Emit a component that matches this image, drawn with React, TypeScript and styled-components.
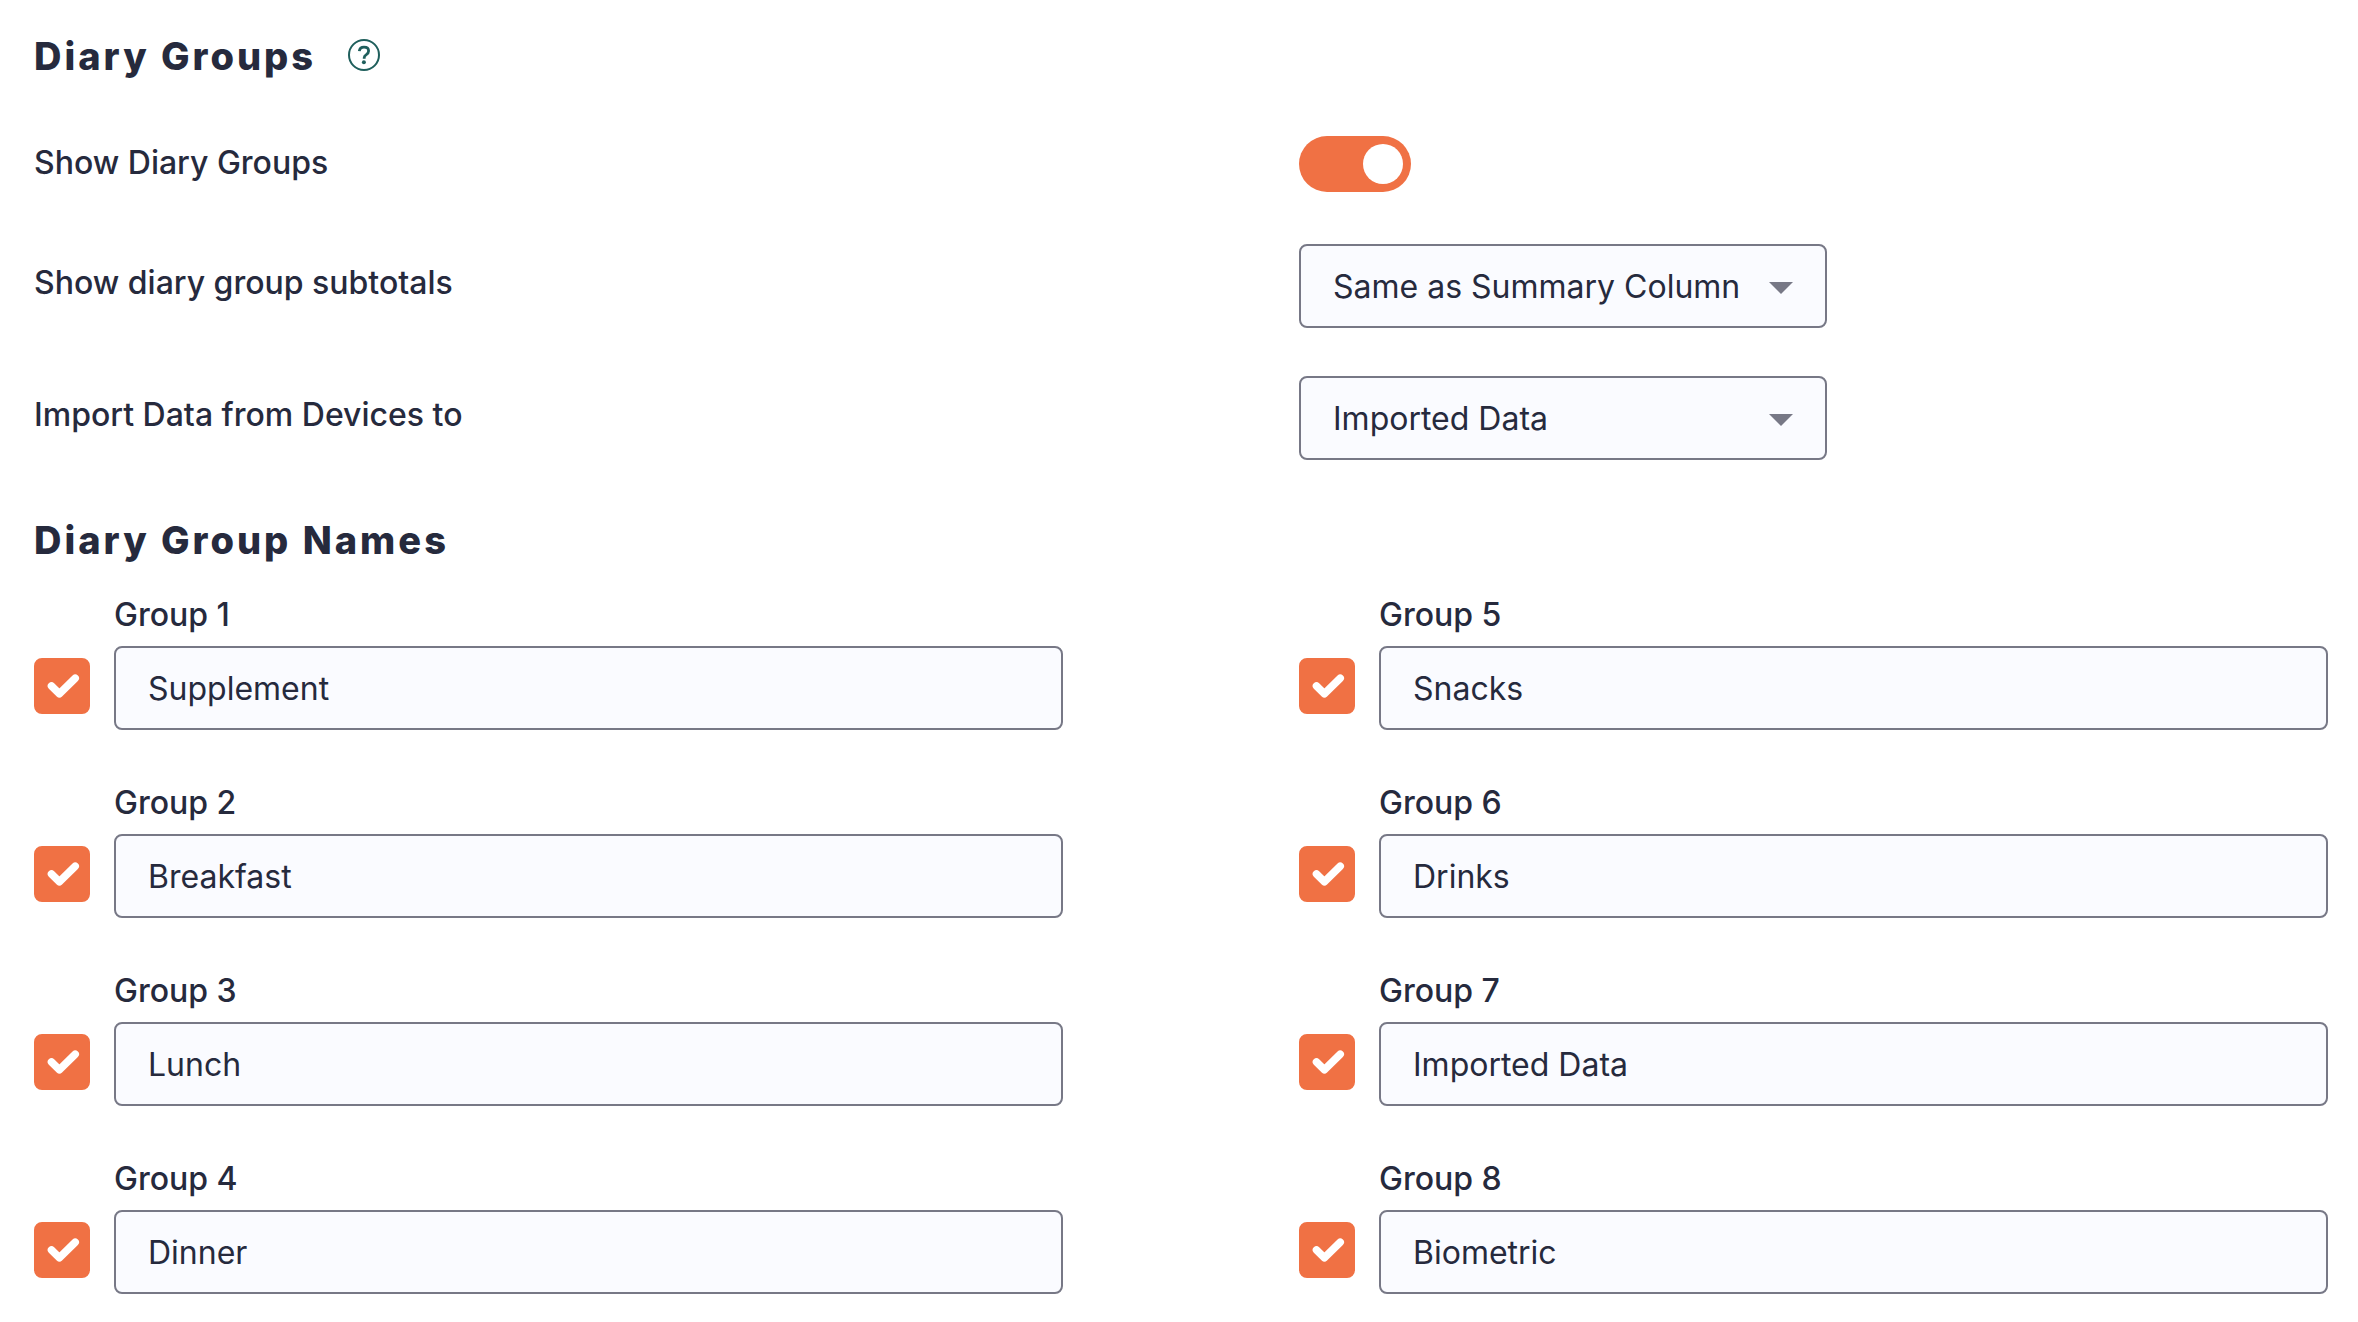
import React, { useState } from "react";
import styled, { createGlobalStyle } from "styled-components";

const color = {
  ink: "#262a3d",
  accent: "#f07144",
  border: "#777886",
  field: "#fafbff",
  help: "#1f5f5c",
};

const GlobalStyle = createGlobalStyle`
  *, *::before, *::after { box-sizing: border-box; }
  body {
    margin: 0;
    background: #ffffff;
    color: ${color.ink};
    font-family: Inter, "Liberation Sans", sans-serif;
    font-size: 32px;
    line-height: 44px;
  }
`;

const Page = styled.main`
  padding: 34px 30px 28px 34px;
`;

const SectionHeader = styled.header`
  display: flex;
  align-items: flex-start;
  gap: 32px;
`;

const Heading = styled.h2`
  margin: 0;
  font-size: 38px;
  font-weight: 800;
  line-height: 44px;
  letter-spacing: 3px;
`;

const HelpButton = styled.button`
  display: flex;
  padding: 5px 0;
  border: 0;
  background: none;
  color: ${color.help};
  cursor: pointer;
`;

const SettingList = styled.div`
  display: grid;
  gap: 48px;
  margin: 46px 0 58px;
`;

const TwoColumns = styled.div`
  display: grid;
  grid-template-columns: minmax(0, 1fr) minmax(0, 1fr);
  column-gap: 236px;

  @media (max-width: 1400px) {
    column-gap: 48px;
  }
`;

const SettingLabel = styled.label`
  padding-top: 17px;
  font-weight: 500;
`;

const Switch = styled.input`
  appearance: none;
  display: flex;
  align-items: center;
  width: 112px;
  height: 56px;
  margin: 12px 0 4px;
  padding: 8px;
  border-radius: 28px;
  background: ${color.border};
  cursor: pointer;

  &::before {
    content: "";
    width: 40px;
    height: 40px;
    border-radius: 50%;
    background: #ffffff;
  }

  &:checked {
    justify-content: flex-end;
    background: ${color.accent};
  }
`;

const SelectBox = styled.div`
  display: grid;
  align-items: center;
  width: 528px;
  max-width: 100%;

  & > * {
    grid-area: 1 / 1;
  }

  svg {
    justify-self: end;
    margin: 4px 34px 0 0;
    pointer-events: none;
  }
`;

const Select = styled.select`
  appearance: none;
  width: 100%;
  height: 84px;
  padding: 2px 72px 0 32px;
  border: 2px solid ${color.border};
  border-radius: 8px;
  background: ${color.field};
  color: inherit;
  font: inherit;
`;

const Groups = styled(TwoColumns)`
  grid-template-rows: repeat(4, auto);
  grid-auto-flow: column;
  row-gap: 51px;
  margin-top: 31px;
`;

const Group = styled.div`
  display: grid;
  grid-template-columns: 56px minmax(0, 1fr);
  column-gap: 24px;
  row-gap: 9px;
`;

const GroupLabel = styled.label`
  grid-column: 2;
  font-weight: 500;
`;

const CheckCell = styled.span`
  display: grid;
  align-self: start;
  place-items: center;
  margin-top: 12px;

  & > * {
    grid-area: 1 / 1;
  }

  svg {
    pointer-events: none;
  }

  input:not(:checked) + svg {
    visibility: hidden;
  }
`;

const Checkbox = styled.input`
  appearance: none;
  width: 56px;
  height: 56px;
  margin: 0;
  border: 2px solid ${color.border};
  border-radius: 8px;
  cursor: pointer;

  &:checked {
    border-color: ${color.accent};
    background: ${color.accent};
  }
`;

const TextInput = styled.input`
  width: 100%;
  height: 84px;
  padding: 0 32px;
  border: 2px solid ${color.border};
  border-radius: 8px;
  background: ${color.field};
  color: inherit;
  font: inherit;
`;

const HelpIcon = () => (
  <svg width="32" height="32" viewBox="0 0 32 32" fill="none" aria-hidden="true">
    <circle cx="16" cy="16" r="15" stroke="currentColor" strokeWidth="2" />
    <path
      d="M11.300 12.200c.3-2.500 2.100-4 4.700-4 2.700 0 4.600 1.500 4.600 3.800 0 1.700-.9 2.700-2.300 3.600-1.500.9-2.100 1.600-2.100 3.200v.9"
      stroke="currentColor"
      strokeWidth="2.800"
    />
    <circle cx="15.900" cy="23.300" r="2" fill="currentColor" />
  </svg>
);

const CheckIcon = () => (
  <svg width="56" height="56" viewBox="0 0 56 56" fill="none" aria-hidden="true">
    <path
      d="M17.500 28 25.400 35.800 41.200 20.200"
      stroke="#ffffff"
      strokeWidth="7.600"
      strokeLinecap="round"
      strokeLinejoin="round"
    />
  </svg>
);

const ArrowIcon = () => (
  <svg width="24" height="12" viewBox="0 0 24 12" aria-hidden="true">
    <path d="M0 0h24L12 12z" fill={color.border} />
  </svg>
);

const groupNames = [
  "Supplement",
  "Breakfast",
  "Lunch",
  "Dinner",
  "Snacks",
  "Drinks",
  "Imported Data",
  "Biometric",
];

const subtotalOptions = ["Same as Summary Column", "Hidden"];

type DropdownProps = { id: string; options: string[]; initial: string };

const Dropdown = ({ id, options, initial }: DropdownProps) => (
  <SelectBox>
    <Select id={id} defaultValue={initial}>
      {options.map((option) => (
        <option key={option}>{option}</option>
      ))}
    </Select>
    <ArrowIcon />
  </SelectBox>
);

const DiaryGroup = ({ index, name }: { index: number; name: string }) => {
  const [enabled, setEnabled] = useState(true);
  const [value, setValue] = useState(name);
  const id = `group-${index}`;
  return (
    <Group>
      <GroupLabel htmlFor={id}>Group {index}</GroupLabel>
      <CheckCell>
        <Checkbox
          type="checkbox"
          aria-label={`Enable group ${index}`}
          checked={enabled}
          onChange={(e) => setEnabled(e.target.checked)}
        />
        <CheckIcon />
      </CheckCell>
      <TextInput id={id} type="text" value={value} onChange={(e) => setValue(e.target.value)} />
    </Group>
  );
};

export default function App() {
  return (
    <>
      <GlobalStyle />
      <Page>
        <SectionHeader>
          <Heading>Diary Groups</Heading>
          <HelpButton type="button" aria-label="Help">
            <HelpIcon />
          </HelpButton>
        </SectionHeader>
        <SettingList>
          <TwoColumns>
            <SettingLabel htmlFor="show-groups">Show Diary Groups</SettingLabel>
            <Switch id="show-groups" type="checkbox" role="switch" defaultChecked />
          </TwoColumns>
          <TwoColumns>
            <SettingLabel htmlFor="subtotals">Show diary group subtotals</SettingLabel>
            <Dropdown id="subtotals" options={subtotalOptions} initial="Same as Summary Column" />
          </TwoColumns>
          <TwoColumns>
            <SettingLabel htmlFor="import-to">Import Data from Devices to</SettingLabel>
            <Dropdown id="import-to" options={groupNames} initial="Imported Data" />
          </TwoColumns>
        </SettingList>
        <Heading>Diary Group Names</Heading>
        <Groups>
          {groupNames.map((name, i) => (
            <DiaryGroup key={name} index={i + 1} name={name} />
          ))}
        </Groups>
      </Page>
    </>
  );
}
